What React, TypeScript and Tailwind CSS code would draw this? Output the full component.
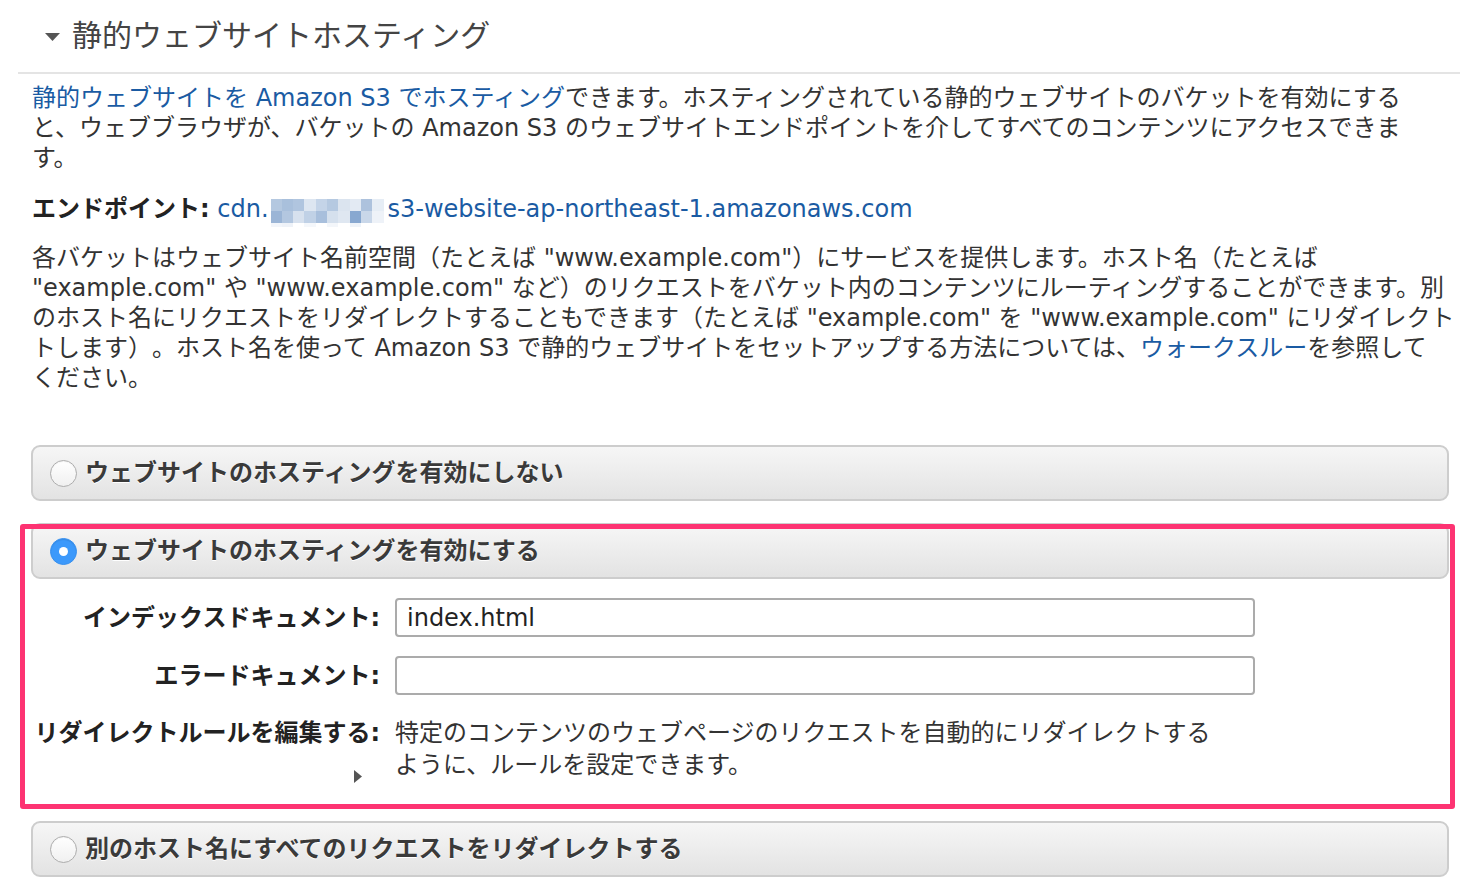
import React from "react";

const blurTop = ["#b4c8e0", "#a9c0dc", "#b0c5df", "#dde6f1", "#c4d4e8", "#b5c9e1", "#dbe4ef", "#e3eaf3", "#adc2dd", "#e6edf5"];
const blurBot = ["#9bb5d6", "#b3c7e0", "#d7e1ee", "#c0d1e6", "#a8bfdc", "#d5e0ed", "#dfe7f1", "#88a8d0", "#c9d7e9", "#eef2f8"];
const blurLow = ["#f2f5fa", "#eef2f8", "#ffffff", "#f4f7fb", "#ffffff", "#f3f6fa", "#ffffff", "#eef3f9", "#ffffff", "#ffffff"];

function Blur() {
  return (
    <span className="inline-flex flex-col align-top relative top-[5px] ml-[2px] mr-[4px]">
      {[blurTop, blurBot, blurLow].map((row, r) => (
        <span key={r} className="flex">
          {row.map((c, i) => (
            <span key={i} className={r === 2 ? "w-[11.3px] h-[4px]" : "w-[11.3px] h-[12px]"} style={{ backgroundColor: c }} />
          ))}
        </span>
      ))}
    </span>
  );
}

function Radio({ checked }: { checked?: boolean }) {
  if (checked) {
    return (
      <span className="w-[27px] h-[27px] rounded-full bg-[#3c99fb] border border-[#3890ee] flex items-center justify-center shrink-0 shadow-[inset_0_1px_1px_rgba(0,0,0,0.1)]">
        <span className="w-[9px] h-[9px] rounded-full bg-white" />
      </span>
    );
  }
  return (
    <span className="w-[27px] h-[27px] rounded-full border border-[#adadad] bg-gradient-to-b from-[#ffffff] to-[#f0f0f0] shrink-0 shadow-[inset_0_1px_1px_rgba(0,0,0,0.05)]" />
  );
}

function RadioBar({ label, checked }: { label: string; checked?: boolean }) {
  return (
    <div className="h-[56px] rounded-[9px] border-2 border-[#cdcdcd] bg-gradient-to-b from-[#f6f6f6] to-[#e3e3e3] flex items-center pl-[17px] gap-[8px]">
      <Radio checked={checked} />
      <span className="font-bold text-[24px] leading-[30px] text-[#3a3a3a] [text-shadow:0_1px_0_#ffffff] whitespace-nowrap">{label}</span>
    </div>
  );
}

export default function App() {
  const link = "text-[#1a5ba3]";
  return (
    <div className="w-[1466px] h-[886px] bg-white relative overflow-hidden font-['DejaVu_Sans','Noto_Sans_CJK_JP',sans-serif] text-[#333] [text-spacing-trim:space-all]">
      <div className="ml-[18px] w-[1442px]">
        <div className="h-[74px] border-b-2 border-[#e4e4e4] flex items-center pl-[27px]">
          <svg width="15" height="8" viewBox="0 0 15 8" className="mr-[12px] mt-[2px]">
            <polygon points="0,0 15,0 7.5,8" fill="#555" />
          </svg>
          <span className="text-[30px] leading-none text-[#444]">静的ウェブサイトホスティング</span>
        </div>

        <div className="pl-[14px] mt-[9px] text-[24px] leading-[30px] whitespace-nowrap">
          <p>
            <span className={link}>静的ウェブサイトを Amazon S3 でホスティング</span>できます。ホスティングされている静的ウェブサイトのバケットを有効にする
            <br />
            と、ウェブブラウザが、バケットの Amazon S3 のウェブサイトエンドポイントを介してすべてのコンテンツにアクセスできま
            <br />
            す。
          </p>
          <p className="mt-[21px]">
            <span className="font-bold text-[#222]">エンドポイント:</span>{" "}
            <span className={link}>
              cdn.
              <Blur />
              s3-website-ap-northeast-1.amazonaws.com
            </span>
          </p>
          <p className="mt-[19px]">
            各バケットはウェブサイト名前空間（たとえば "www.example.com"）にサービスを提供します。ホスト名（たとえば
            <br />
            "example.com" や "www.example.com" など）のリクエストをバケット内のコンテンツにルーティングすることができます。別
            <br />
            のホスト名にリクエストをリダイレクトすることもできます（たとえば "example.com" を "www.example.com" にリダイレクト
            <br />
            トします）。ホスト名を使って Amazon S3 で静的ウェブサイトをセットアップする方法については、<span className={link}>ウォークスルー</span>を参照して
            <br />
            ください。
          </p>
        </div>

        <div className="mt-[52px] ml-[13px] w-[1418px]">
          <RadioBar label="ウェブサイトのホスティングを有効にしない" />

          <div className="mt-[22px]">
            <RadioBar label="ウェブサイトのホスティングを有効にする" checked />
            <div className="pt-[19px] grid grid-cols-[349px_860px] gap-x-[15px] gap-y-[19px] text-[24px]">
              <div className="flex items-center justify-end font-bold text-[#222] whitespace-nowrap">インデックスドキュメント:</div>
              <div className="h-[39px] border-2 border-[#ababab] rounded-[4px] flex items-center pl-[10px] text-[#222]">index.html</div>

              <div className="flex items-center justify-end font-bold text-[#222] whitespace-nowrap">エラードキュメント:</div>
              <div className="h-[39px] border-2 border-[#ababab] rounded-[4px]" />

              <div className="mt-[3px] flex flex-col items-end">
                <div className="font-bold text-[#222] leading-[32px] whitespace-nowrap">リダイレクトルールを編集する:</div>
                <div className="mt-[21px] mr-[18px]">
                  <svg width="8" height="13" viewBox="0 0 8 13">
                    <polygon points="0,0 8,6.5 0,13" fill="#555" />
                  </svg>
                </div>
              </div>
              <div className="mt-[3px] leading-[32px] text-[#333] whitespace-nowrap">
                特定のコンテンツのウェブページのリクエストを自動的にリダイレクトする
                <br />
                ように、ルールを設定できます。
              </div>
            </div>
          </div>

          <div className="mt-[38px]">
            <RadioBar label="別のホスト名にすべてのリクエストをリダイレクトする" />
          </div>
        </div>
      </div>

      <div className="absolute left-[20px] top-[524px] w-[1435px] h-[285px] border-[5px] border-[#fd3372] rounded-[3px] pointer-events-none" />
    </div>
  );
}
